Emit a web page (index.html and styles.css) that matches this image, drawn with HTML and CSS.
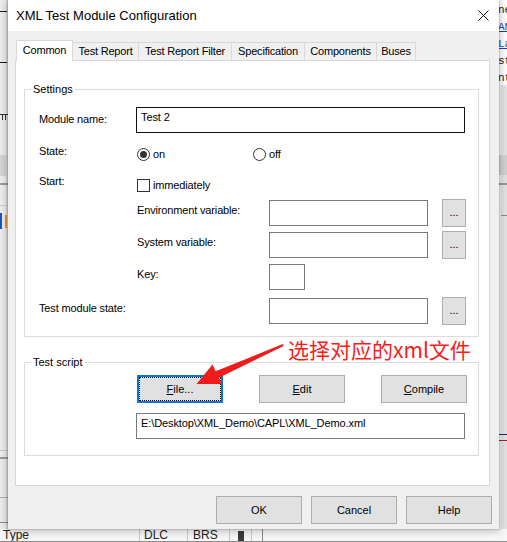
FILE: index.html
```html
<!DOCTYPE html>
<html>
<head>
<meta charset="utf-8">
<title>XML Test Module Configuration</title>
<link rel="stylesheet" href="styles.css">
</head>
<body>
<div class="desktop">
  <div class="bg-left"></div>

  <div class="dialog">
    <div class="titlebar">
      <span class="title">XML Test Module Configuration</span>
      <svg class="close" width="11" height="11" viewBox="0 0 11 11"><path d="M0.5 0.5L10.5 10.5M10.5 0.5L0.5 10.5" stroke="#111" stroke-width="1"/></svg>
    </div>
    <div class="dlg-body">
      <div class="tabs">
        <div class="tab active w-common">Common</div>
        <div class="tab w-report">Test Report</div>
        <div class="tab w-filter">Test Report Filter</div>
        <div class="tab w-spec">Specification</div>
        <div class="tab w-comp">Components</div>
        <div class="tab w-buses">Buses</div>
      </div>
      <div class="panel">
        <fieldset class="group settings">
          <legend>Settings</legend>
          <div class="set-body">
            <div class="row r-mod">
              <span class="lbl">Module name:</span>
              <div class="edit edit-wide edit-focus">Test 2</div>
            </div>
            <div class="row r-state">
              <span class="lbl lbl-top">State:</span>
              <div class="choices">
                <label class="opt opt-on"><span class="radio checked"></span>on</label>
                <label class="opt"><span class="radio"></span>off</label>
              </div>
            </div>
            <div class="row r-start">
              <span class="lbl lbl-top">Start:</span>
              <div class="choices">
                <label class="opt"><span class="check"></span>immediately</label>
              </div>
            </div>
            <div class="row r-env">
              <span class="lbl lbl-col2">Environment variable:</span>
              <div class="edit edit-field"></div>
              <div class="btn btn-dots">...</div>
            </div>
            <div class="row r-sys">
              <span class="lbl lbl-col2">System variable:</span>
              <div class="edit edit-field"></div>
              <div class="btn btn-dots">...</div>
            </div>
            <div class="row r-key">
              <span class="lbl lbl-col2">Key:</span>
              <div class="edit edit-key"></div>
            </div>
            <div class="row r-tms">
              <span class="lbl lbl-span">Test module state:</span>
              <div class="edit edit-field"></div>
              <div class="btn btn-dots">...</div>
            </div>
          </div>
        </fieldset>

        <fieldset class="group script">
          <legend>Test script</legend>
          <div class="scr-body">
            <div class="btn-row">
              <div class="btn btn-cmd btn-focus"><span><u>F</u>ile...</span></div>
              <div class="btn btn-cmd"><span><u>E</u>dit</span></div>
              <div class="btn btn-cmd"><span><u>C</u>ompile</span></div>
            </div>
            <div class="edit edit-path">E:\Desktop\XML_Demo\CAPL\XML_Demo.xml</div>
          </div>
        </fieldset>
      </div>
      <div class="actions">
        <div class="btn btn-cmd">OK</div>
        <div class="btn btn-cmd">Cancel</div>
        <div class="btn btn-cmd">Help</div>
      </div>
    </div>
  </div>

  <div class="bg-right">
    <div class="br-text">
      <div class="br-line">ne</div>
      <div class="br-line br-link">AN</div>
      <div class="br-line br-link">La</div>
      <div class="br-line">st</div>
      <div class="br-line">nt</div>
    </div>
    <div class="br-rest"></div>
  </div>

  <div class="bg-bottom">
    <div class="bc bc-type">Type</div>
    <div class="bc bc-dlc">DLC</div>
    <div class="bc bc-brs">BRS</div>
    <div class="bc bc-icon"><span class="mini-icon"></span></div>
    <div class="bc bc-small"></div>
    <div class="bc bc-rest"></div>
  </div>
</div>

<div class="annotation">
  <svg class="arrow" width="507" height="542" viewBox="0 0 507 542">
    <polygon points="283.6,345.9 219,377.8 222,384 196.5,384 212.5,364.6 215.6,371.2 282.8,344.1" fill="#f01c1c"/>
  </svg>
  <div class="note">选择对应的xml文件</div>
</div>
</body>
</html>
```

FILE: styles.css
```css
* { box-sizing: border-box; }

html, body { margin: 0; padding: 0; }

body {
  width: 507px;
  height: 542px;
  overflow: hidden;
  position: relative;
  background: #f2f2f2;
  font-family: "Liberation Sans", Arial, sans-serif;
  font-size: 11px;
  line-height: 13px;
  color: #000;
}

/* ---------- desktop behind the dialog ---------- */
.desktop {
  display: grid;
  grid-template-columns: 8px 491px 8px;
  grid-template-rows: 529px 13px;
}

.bg-left {
  grid-row: 1;
  grid-column: 1;
  background:
    linear-gradient(#1a1a1a, #1a1a1a) 0 11px / 7px 1px no-repeat,
    linear-gradient(#1a1a1a, #1a1a1a) 0 62px / 7px 1px no-repeat,
    linear-gradient(#333, #333) 0 114px / 8px 1px no-repeat,
    linear-gradient(#333, #333) 2px 114px / 1px 6px no-repeat,
    linear-gradient(#333, #333) 5px 114px / 1px 6px no-repeat,
    linear-gradient(#d6d6d6, #d6d6d6) 0 155px / 8px 21px no-repeat,
    linear-gradient(#9a9a9a, #9a9a9a) 0 183px / 8px 2px no-repeat,
    linear-gradient(#cfcfcf, #cfcfcf) 0 205px / 8px 1px no-repeat,
    linear-gradient(#2454b0, #2454b0) 0 213px / 2px 16px no-repeat,
    linear-gradient(#e09a2a, #e09a2a) 5px 215px / 2px 13px no-repeat,
    linear-gradient(#c8c8c8, #c8c8c8) 0 450px / 8px 1px no-repeat,
    linear-gradient(#9a9a9a, #9a9a9a) 0 457px / 8px 2px no-repeat,
    linear-gradient(#b0b0b0, #b0b0b0) 0 497px / 8px 1px no-repeat,
    linear-gradient(#8a8a8a, #8a8a8a) 0 522px / 8px 1px no-repeat,
    linear-gradient(90deg, #eeeeee 0 6px, #dadada 6px 8px);
}

.bg-right {
  grid-row: 1;
  grid-column: 3;
  display: flex;
  flex-direction: column;
  overflow: hidden;
}

.br-text {
  height: 85px;
  background: #fff;
  padding-top: 2px;
  font-family: "Liberation Mono", monospace;
  font-size: 11px;
  line-height: 17px;
  white-space: nowrap;
  text-indent: -1px;
  color: #222;
}

.br-link { color: #1a3cc8; text-decoration: underline; }

.br-rest {
  flex: 1;
  background:
    linear-gradient(#d2d2d2, #d2d2d2) 0 70px / 8px 20px no-repeat,
    linear-gradient(#9a9a9a, #9a9a9a) 0 98px / 8px 2px no-repeat,
    linear-gradient(#8a8a8a, #8a8a8a) 2px 130px / 6px 1px no-repeat,
    linear-gradient(#1c2a7a, #1c2a7a) 0 349px / 8px 1px no-repeat,
    linear-gradient(#b01a3c, #b01a3c) 0 355px / 8px 1px no-repeat,
    linear-gradient(90deg, #f6f6f6 0 2px, #e4e4e4 2px 8px);
}

.bg-bottom {
  grid-row: 2;
  grid-column: 1 / -1;
  display: flex;
  background: #f7f7f7;
  font-size: 12px;
  line-height: 13px;
  color: #222;
  overflow: hidden;
  border-bottom: 1px solid #8c8c8c;
}

.bc { border-right: 1px solid #c9c9c9; padding-left: 4px; white-space: nowrap; }
.bc-type { width: 140px; padding-left: 3px; }
.bc-dlc { width: 48px; padding-left: 4px; }
.bc-brs { width: 42px; padding-left: 5px; }
.bc-icon { width: 22px; padding: 2px 0 0 8px; }
.mini-icon { display: block; width: 6px; height: 10px; background: #3a3a3a; }
.bc-small { width: 11px; border-right-color: #888; }
.bc-rest { flex: 1; border-right: 0; }

/* ---------- dialog ---------- */
.dialog {
  grid-row: 1;
  grid-column: 2;
  position: relative;
  z-index: 1;
  display: flex;
  flex-direction: column;
  background: #f0f0f0;
  box-shadow: 0 0 0 1px rgba(0, 0, 0, 0.1), 0 1px 8px 1px rgba(0, 0, 0, 0.25);
}

.titlebar {
  height: 31px;
  flex: none;
  background: #fff;
  display: flex;
  align-items: center;
  justify-content: space-between;
  padding: 0 10px 0 8px;
}

.title { font-size: 13px; line-height: 16px; color: #000; }

.close { display: block; }

.dlg-body {
  flex: 1;
  display: flex;
  flex-direction: column;
  padding: 9px 9px 0 7px;
}

/* tabs */
.tabs {
  display: flex;
  align-items: flex-end;
  height: 20px;
  padding-left: 1px;
}

.tab {
  height: 18px;
  margin-left: -1px;
  border: 1px solid #d9d9d9;
  border-bottom: 0;
  background: #f0f0f0;
  display: flex;
  align-items: center;
  justify-content: center;
  letter-spacing: -0.2px;
  white-space: nowrap;
}

.tab:first-child { margin-left: 0; }

.tab.active {
  height: 21px;
  margin-bottom: -1px;
  padding-bottom: 2px;
  background: #fff;
  position: relative;
  z-index: 1;
}

.w-common { width: 57px; }
.w-report { width: 67px; }
.w-filter { width: 94px; }
.w-spec { width: 74px; }
.w-comp { width: 73px; }
.w-buses { width: 40px; }

.panel {
  height: 426px;
  flex: none;
  background: #fff;
  border: 1px solid #d9d9d9;
  padding: 0 10px 0 8px;
}

/* group boxes */
.group {
  margin: 0;
  padding: 0;
  border: 1px solid #dcdcdc;
  min-width: 0;
}

.group legend {
  margin-left: 6px;
  padding: 0 2px;
  font-size: 11px;
  line-height: 13px;
}

.settings { margin-top: 22px; }
.script { margin-top: 19px; }

.set-body { padding: 11px 0 11px 14px; }

.row {
  display: grid;
  grid-template-columns: 98px 132px 159px 14px 24px;
}

.r-mod { height: 26px; }
.r-state { height: 20px; margin-top: 11px; }
.r-start { height: 20px; margin-top: 10px; }
.r-env { height: 28px; margin-top: 5px; }
.r-sys { height: 28px; margin-top: 4px; }
.r-key { height: 28px; margin-top: 4px; }
.r-tms { height: 28px; margin-top: 6px; }

.lbl {
  grid-column: 1;
  align-self: start;
  padding-top: 5px;
  white-space: nowrap;
  letter-spacing: -0.15px;
}

.r-mod .lbl { padding-top: 6px; }
.lbl-top { padding-top: 1px; }
.lbl-col2 { grid-column: 2; }
.lbl-span { grid-column: 1 / 3; }

.choices {
  grid-column: 2 / -1;
  display: flex;
  align-items: center;
}

.r-start .choices { padding-top: 2px; }

.opt {
  display: flex;
  align-items: center;
  gap: 3px;
  letter-spacing: -0.15px;
}

.opt-on { width: 116px; }

.radio {
  width: 13px;
  height: 13px;
  border: 1px solid #333;
  border-radius: 50%;
  background: #fff;
  display: flex;
  align-items: center;
  justify-content: center;
}

.radio.checked::after {
  content: "";
  width: 7px;
  height: 7px;
  border-radius: 50%;
  background: #333;
}

.check {
  width: 13px;
  height: 13px;
  border: 1px solid #333;
  background: #fff;
}

/* edit boxes */
.edit {
  height: 26px;
  border: 1px solid #7a7a7a;
  background: #fff;
  padding: 3px 4px 0 4px;
  white-space: nowrap;
  overflow: hidden;
  letter-spacing: -0.1px;
}

.edit-wide {
  grid-column: 2 / -1;
  margin: 0 1px 0 -1px;
}

.edit-focus { border-color: #111; }

.edit-field { grid-column: 3; align-self: center; }
.edit-key { grid-column: 3; width: 36px; align-self: center; }

.edit-path { margin: 10px 2px 0 -1px; }

/* buttons */
.btn {
  background: #e1e1e1;
  border: 1px solid #adadad;
  display: flex;
  align-items: center;
  justify-content: center;
  white-space: nowrap;
}

.btn-dots {
  grid-column: 5;
  height: 28px;
  padding-bottom: 2px;
}

.btn-cmd {
  width: 86px;
  height: 28px;
}

.btn-focus {
  border: 2px solid #0078d7;
  outline: 1px dotted #000;
  outline-offset: -3px;
}

.scr-body { padding: 6px 11px 16px 112px; }

.btn-row {
  display: flex;
  justify-content: space-between;
}

.actions {
  display: flex;
  justify-content: flex-end;
  gap: 9px;
  margin: 10px -2px 0 0;
}

/* ---------- annotation overlay ---------- */
.annotation {
  position: absolute;
  left: 0;
  top: 0;
  width: 507px;
  height: 542px;
  pointer-events: none;
  z-index: 5;
}

.arrow { position: absolute; left: 0; top: 0; }

.note {
  position: absolute;
  left: 288px;
  top: 338px;
  font-family: "Noto Sans CJK SC", "Liberation Sans", sans-serif;
  font-size: 21px;
  line-height: 23px;
  color: #ff1a1a;
  white-space: nowrap;
}
```
